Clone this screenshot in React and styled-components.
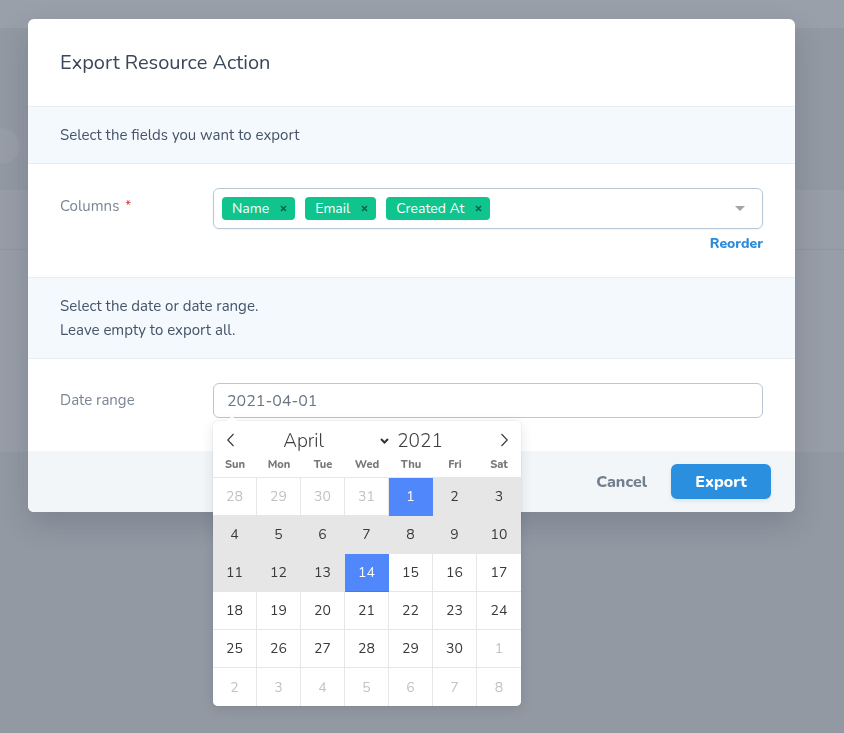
import React from 'react';
import styled, { createGlobalStyle, css } from 'styled-components';

const GlobalStyle = createGlobalStyle`
  html, body {
    margin: 0;
    padding: 0;
  }
  body {
    background: #9299a3;
    font-family: 'Nunito', 'Lato', 'Noto Sans', sans-serif;
    -webkit-font-smoothing: antialiased;
  }
  * {
    box-sizing: border-box;
  }
`;

// page behind the dimmed overlay
const Page = styled.div`
  min-height: 100vh;
  background: #9299a3;
`;

const TopBar = styled.div`
  height: 28px;
  background: #9aa0a9;
`;

const Avatar = styled.div`
  width: 40px;
  height: 36px;
  margin: 100px 0 0 -20px;
  border-radius: 50%;
  background: #989ea8;
`;

const BackPanel = styled.div`
  margin-top: 26px;
  height: 262px;
  background: #989ea8;
`;

const BackPanelHead = styled.div`
  height: 60px;
  border-bottom: 1px solid #8f96a0;
`;

const Overlay = styled.div`
  position: fixed;
  inset: 0;
  padding: 19px 0 0 28px;
`;

const Modal = styled.div`
  position: relative;
  width: 767px;
  background: #fff;
  border-radius: 6px;
  box-shadow: 0 12px 30px rgba(30, 40, 60, 0.18);
`;

const Header = styled.div`
  height: 88px;
  display: flex;
  align-items: center;
  padding: 0 32px;
  font-size: 20px;
  color: #3a4659;
  border-bottom: 1px solid #e8edf2;
`;

const Notice = styled.div`
  padding: 16px 32px;
  background: #f4f9fd;
  font-size: 15px;
  line-height: 24px;
  color: #465368;
  border-bottom: 1px solid #e8edf2;
`;

const FieldRow = styled.div`
  display: flex;
  padding: 24px 32px ${(p) => p.$pb}px;
  ${(p) =>
    p.$divider &&
    css`
      border-bottom: 1px solid #e8edf2;
    `}
`;

const Label = styled.div`
  width: 153px;
  flex-shrink: 0;
  padding-top: ${(p) => p.$pt}px;
  font-size: 15px;
  line-height: 24px;
  color: #7a8596;
`;

const Required = styled.span`
  color: #e3342f;
  margin-left: 6px;
  font-size: 13px;
  vertical-align: 1px;
`;

const Control = styled.div`
  position: relative;
  flex: 1;
`;

const MultiSelect = styled.div`
  height: 41px;
  display: flex;
  align-items: center;
  gap: 10px;
  padding: 0 17px 0 8px;
  border: 1px solid #b9c6d4;
  border-radius: 6px;
  box-shadow: 0 1px 2px rgba(0, 0, 0, 0.05);
`;

const Tag = styled.span`
  height: 23px;
  display: inline-flex;
  align-items: center;
  gap: 11px;
  padding: 0 8px 0 10px;
  border-radius: 4px;
  background: #0fc48d;
  color: #fff;
  font-size: 14px;
`;

const Caret = styled.span`
  margin-left: auto;
  width: 0;
  height: 0;
  border-left: 5px solid transparent;
  border-right: 5px solid transparent;
  border-top: 5px solid #a0a5ab;
`;

const ReorderLink = styled.div`
  margin-top: 7px;
  text-align: right;
  font-size: 14px;
  line-height: 16px;
  font-weight: 800;
  color: #2b8ad8;
`;

const DateInput = styled.div`
  height: 35px;
  display: flex;
  align-items: center;
  padding: 0 13px;
  border: 1px solid #b9c6d4;
  border-radius: 6px;
  font-size: 16px;
  color: #6b7685;
`;

const Footer = styled.div`
  display: flex;
  justify-content: flex-end;
  align-items: center;
  padding: 13px 24px;
  background: #f3f6f9;
  border-radius: 0 0 6px 6px;
`;

const CancelButton = styled.button`
  border: none;
  background: none;
  padding: 0 24px;
  font-family: inherit;
  font-size: 16px;
  font-weight: 800;
  color: #737f8f;
`;

const ExportButton = styled.button`
  width: 100px;
  height: 35px;
  border: none;
  border-radius: 6px;
  background: #2b8fe0;
  color: #fff;
  font-family: inherit;
  font-size: 16px;
  font-weight: 800;
  box-shadow: 0 2px 4px rgba(0, 0, 0, 0.08);
`;

/* flatpickr-like calendar popup */
const Calendar = styled.div`
  position: absolute;
  top: 38px;
  left: 0;
  width: 308px;
  background: #fff;
  border-radius: 5px;
  box-shadow: 0 3px 13px rgba(0, 0, 0, 0.1), 0 0 0 1px rgba(0, 0, 0, 0.03);
  z-index: 5;

  &::before {
    content: '';
    position: absolute;
    top: -5px;
    left: 14px;
    border-left: 5px solid transparent;
    border-right: 5px solid transparent;
    border-bottom: 5px solid #fff;
  }
`;

const MonthNav = styled.div`
  height: 30px;
  display: flex;
  align-items: center;
  color: #3c3c3c;
`;

const NavArrow = styled.span`
  width: 34px;
  height: 30px;
  display: flex;
  align-items: center;
  justify-content: center;
  padding-top: 7px;
`;

const MonthCenter = styled.div`
  flex: 1;
  display: flex;
  justify-content: center;
  align-items: center;
  padding: 9px 14px 0 0;
  font-size: 19px;
  font-weight: 300;
`;

const MonthSelect = styled.span`
  width: 112px;
  display: inline-flex;
  align-items: center;
  justify-content: space-between;
  padding-left: 6px;
  margin-right: 8px;
`;

const Weekdays = styled.div`
  height: 26px;
  display: grid;
  grid-template-columns: repeat(7, 1fr);
  align-items: center;
  padding-top: 1px;
`;

const Weekday = styled.span`
  text-align: center;
  font-size: 11px;
  font-weight: 800;
  color: #787878;
`;

const DaysGrid = styled.div`
  display: grid;
  grid-template-columns: repeat(7, 44px);
  border-top: 1px solid #e6e6e6;
`;

const dayVariants = {
  normal: css`
    background: #fff;
    border-color: #e6e6e6;
    color: #3a3a3a;
  `,
  muted: css`
    background: #fff;
    border-color: #e6e6e6;
    color: #c2c2c2;
  `,
  range: css`
    background: #e6e6e6;
    border-color: #e6e6e6;
    color: #3a3a3a;
  `,
  selected: css`
    background: #5087fb;
    border-color: #5087fb;
    color: #fff;
  `,
};

const Day = styled.span`
  height: 38px;
  display: flex;
  align-items: center;
  justify-content: center;
  font-size: 14px;
  border-right: 1px solid;
  border-bottom: 1px solid;
  ${(p) => dayVariants[p.$variant]}
  ${(p) =>
    p.$today &&
    css`
      border-bottom-color: #e2445c;
    `}
  &:nth-child(7n) {
    border-right: none;
  }
  &:nth-last-child(-n + 7) {
    border-bottom: none;
  }
  &:nth-last-child(7) {
    border-bottom-left-radius: 5px;
  }
  &:last-child {
    border-bottom-right-radius: 5px;
  }
`;

const TagClose = () => (
  <svg width="7" height="7" viewBox="0 0 7 7">
    <path d="M1 1L6 6M6 1L1 6" stroke="#0c6047" strokeWidth="1.5" fill="none" />
  </svg>
);

const Chevron = ({ dir }) => (
  <svg width="9" height="14" viewBox="0 0 9 14">
    <path
      d={dir === 'left' ? 'M7.5 1 L1.8 7 L7.5 13' : 'M1.5 1 L7.2 7 L1.5 13'}
      stroke="#3c3c3c"
      strokeWidth="1.2"
      fill="none"
    />
  </svg>
);

const SelectChevron = () => (
  <svg width="9" height="6" viewBox="0 0 9 6">
    <path d="M1 1 L4.5 4.5 L8 1" stroke="#333" strokeWidth="2" fill="none" />
  </svg>
);

const weekdays = ['Sun', 'Mon', 'Tue', 'Wed', 'Thu', 'Fri', 'Sat'];

// April 2021, range 1 → 14 selected, today = 14
const buildDays = () => {
  const days = [];
  [28, 29, 30, 31].forEach((d) => days.push({ d, variant: 'muted' }));
  for (let d = 1; d <= 30; d++) {
    let variant = 'normal';
    if (d === 1 || d === 14) variant = 'selected';
    else if (d > 1 && d < 14) variant = 'range';
    days.push({ d, variant, today: d === 14 });
  }
  for (let d = 1; d <= 8; d++) days.push({ d, variant: 'muted' });
  return days;
};

const days = buildDays();

export default function App() {
  return (
    <>
      <GlobalStyle />
      <Page>
        <TopBar />
        <Avatar />
        <BackPanel>
          <BackPanelHead />
        </BackPanel>
      </Page>
      <Overlay>
        <Modal>
          <Header>Export Resource Action</Header>
          <Notice>Select the fields you want to export</Notice>
          <FieldRow $pb={25} $divider>
            <Label $pt={6}>
              Columns<Required>*</Required>
            </Label>
            <Control>
              <MultiSelect>
                {['Name', 'Email', 'Created At'].map((t) => (
                  <Tag key={t}>
                    {t}
                    <TagClose />
                  </Tag>
                ))}
                <Caret />
              </MultiSelect>
              <ReorderLink>Reorder</ReorderLink>
            </Control>
          </FieldRow>
          <Notice>
            Select the date or date range.
            <br />
            Leave empty to export all.
          </Notice>
          <FieldRow $pb={33}>
            <Label $pt={5}>Date range</Label>
            <Control>
              <DateInput>2021-04-01</DateInput>
              <Calendar>
                <MonthNav>
                  <NavArrow>
                    <Chevron dir="left" />
                  </NavArrow>
                  <MonthCenter>
                    <MonthSelect>
                      April
                      <SelectChevron />
                    </MonthSelect>
                    2021
                  </MonthCenter>
                  <NavArrow>
                    <Chevron dir="right" />
                  </NavArrow>
                </MonthNav>
                <Weekdays>
                  {weekdays.map((w) => (
                    <Weekday key={w}>{w}</Weekday>
                  ))}
                </Weekdays>
                <DaysGrid>
                  {days.map((day, i) => (
                    <Day key={i} $variant={day.variant} $today={day.today}>
                      {day.d}
                    </Day>
                  ))}
                </DaysGrid>
              </Calendar>
            </Control>
          </FieldRow>
          <Footer>
            <CancelButton>Cancel</CancelButton>
            <ExportButton>Export</ExportButton>
          </Footer>
        </Modal>
      </Overlay>
    </>
  );
}
